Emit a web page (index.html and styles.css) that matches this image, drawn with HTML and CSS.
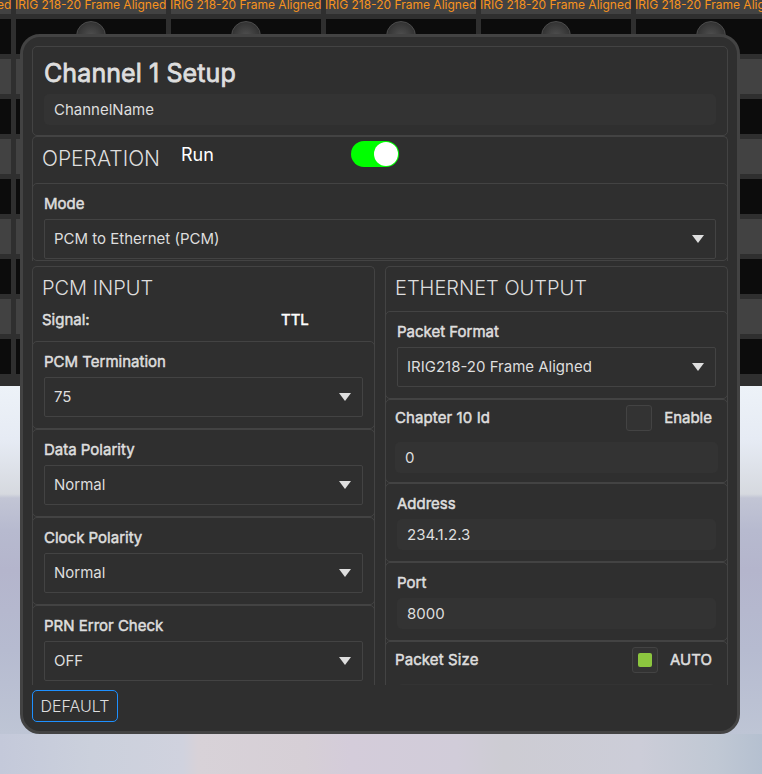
FILE: index.html
```html
<!DOCTYPE html>
<html lang="en">
<head>
<meta charset="utf-8">
<title>Channel 1 Setup</title>
<link rel="stylesheet" href="styles.css">
</head>
<body>
<div class="board">
  <div class="board-row status"><span>IRIG 218-20 Frame Aligned</span><span>IRIG 218-20 Frame Aligned</span><span>IRIG 218-20 Frame Aligned</span><span>IRIG 218-20 Frame Aligned</span><span>IRIG 218-20 Frame Aligned</span><span>IRIG 218-20 Frame Aligned</span></div>
  <div class="board-row dark lamps"><span></span><span><i></i></span><span><i></i></span><span><i></i></span><span><i></i></span><span><i></i></span></div>
  <div class="board-row"><span></span><span></span><span></span><span></span><span></span><span></span></div>
  <div class="board-row dark"><span></span><span></span><span></span><span></span><span></span><span></span></div>
  <div class="board-row"><span></span><span></span><span></span><span></span><span></span><span></span></div>
  <div class="board-row dark"><span></span><span></span><span></span><span></span><span></span><span></span></div>
  <div class="board-row"><span></span><span></span><span></span><span></span><span></span><span></span></div>
  <div class="board-row dark"><span></span><span></span><span></span><span></span><span></span><span></span></div>
  <div class="board-row"><span></span><span></span><span></span><span></span><span></span><span></span></div>
  <div class="board-row dark"><span></span><span></span><span></span><span></span><span></span><span></span></div>
</div>

<main class="dialog">
  <section class="box name-box">
    <h1>Channel 1 Setup</h1>
    <div class="input">ChannelName</div>
  </section>

  <section class="group operation">
    <div class="operation-head">
      <h2>OPERATION</h2>
      <span class="run">Run</span>
      <span class="toggle"></span>
    </div>
    <div class="box field">
      <label>Mode</label>
      <div class="select">PCM to Ethernet (PCM)<svg width="12" height="8"><path d="M0 0H12L6 8Z"/></svg></div>
    </div>
  </section>

  <div class="columns">
    <section class="group">
      <div class="pcm-head">
        <h2>PCM INPUT</h2>
        <div class="signal"><b>Signal:</b><b class="value">TTL</b></div>
      </div>
      <div class="box field">
        <label>PCM Termination</label>
        <div class="select">75<svg width="12" height="8"><path d="M0 0H12L6 8Z"/></svg></div>
      </div>
      <div class="box field">
        <label>Data Polarity</label>
        <div class="select">Normal<svg width="12" height="8"><path d="M0 0H12L6 8Z"/></svg></div>
      </div>
      <div class="box field">
        <label>Clock Polarity</label>
        <div class="select">Normal<svg width="12" height="8"><path d="M0 0H12L6 8Z"/></svg></div>
      </div>
      <div class="box field">
        <label>PRN Error Check</label>
        <div class="select">OFF<svg width="12" height="8"><path d="M0 0H12L6 8Z"/></svg></div>
      </div>
    </section>

    <section class="group">
      <div class="eth-head"><h2>ETHERNET OUTPUT</h2></div>
      <div class="box field">
        <label>Packet Format</label>
        <div class="select">IRIG218-20 Frame Aligned<svg width="12" height="8"><path d="M0 0H12L6 8Z"/></svg></div>
      </div>
      <div class="box check-field chapter">
        <div class="check-row"><b>Chapter 10 Id</b><span class="check"></span><b>Enable</b></div>
        <div class="input">0</div>
      </div>
      <div class="box text-field">
        <label>Address</label>
        <div class="input">234.1.2.3</div>
      </div>
      <div class="box text-field">
        <label>Port</label>
        <div class="input">8000</div>
      </div>
      <div class="box check-field packet-size">
        <div class="check-row"><b>Packet Size</b><span class="check on"></span><b>AUTO</b></div>
        <div class="input"></div>
      </div>
    </section>
  </div>

  <button class="default" type="button">DEFAULT</button>
</main>
</body>
</html>
```

FILE: styles.css
```css
* {
  box-sizing: border-box;
}

body {
  margin: 0;
  width: 762px;
  height: 774px;
  overflow: hidden;
  position: relative;
  font-family: Inter, "Liberation Sans", sans-serif;
  font-size: 15px;
  color: #dedede;
  background:
    linear-gradient(90deg, #c4c9da 0%, #cbd0dc 12%, #d0d2de 24%, #d8d2d8 26%, #d6cfd6 40%, #d4ccda 46%, #d1ccd9 60%, #cdccd3 66%, #cccdd8 84%, #c0c8d4 94%, #b5c0d0 100%) 0 734px / 762px 40px no-repeat,
    linear-gradient(180deg, #edf2f8 386px, #e6ebf4 440px, #d6d9df 494px, #c2c5d5 498px, #b7bacf 530px, #b4b5cc 570px, #b6bbd0 650px, #bec5d5 734px);
}

.board {
  display: flex;
  flex-direction: column;
  gap: 5px;
  height: 386px;
  overflow: hidden;
  background: #2f2f2f;
}

.board-row {
  display: grid;
  grid-template-columns: repeat(6, 150px);
  column-gap: 5px;
  margin-left: -139px;
  width: 925px;
  height: 35px;
  flex: none;
}

.board-row span {
  background: #424242;
}

.board-row.dark span {
  background: #0c0c0c;
}

.board-row.status {
  height: 14px;
}

.status span {
  color: #f7931e;
  font-size: 12px;
  line-height: 10px;
  text-indent: -1px;
  white-space: nowrap;
}

.lamps i {
  display: block;
  width: 30px;
  height: 30px;
  margin: 2px auto 0;
  border: 1px solid #4c4c4c;
  border-radius: 50%;
  background: radial-gradient(circle, #505050, #272727);
}

.dialog {
  position: absolute;
  left: 20px;
  top: 34px;
  width: 720px;
  height: 700px;
  padding: 9px;
  border: 3px solid #434343;
  border-radius: 20px;
  background: #2f2f2f;
}

.box {
  border: 1px solid #434343;
  border-radius: 5px;
}

h1,
h2 {
  margin: 0;
}

h1 {
  font-size: 25px;
  font-weight: 400;
  line-height: 30px;
  letter-spacing: 0.1px;
  -webkit-text-stroke: 0.8px currentColor;
}

h2 {
  font-size: 20px;
  font-weight: 300;
  line-height: 25px;
}

label,
b {
  display: block;
  font-weight: 400;
  line-height: 20px;
  -webkit-text-stroke: 0.5px currentColor;
}

.name-box {
  height: 90px;
  padding: 11px;
}

.name-box .input {
  margin-top: 6px;
}

.input {
  height: 31px;
  padding-left: 10px;
  border-radius: 5px;
  background: #333;
  line-height: 31px;
}

.select {
  display: flex;
  align-items: center;
  justify-content: space-between;
  height: 40px;
  padding: 0 11px 2px 9px;
  border: 1px solid #434343;
  border-radius: 2px;
}

.select svg {
  margin-top: 2px;
  fill: #dedede;
}

.group {
  border: 1px solid #434343;
  border-bottom: 0;
  border-radius: 5px 5px 0 0;
}

.group > .box {
  margin: 0 -1px;
}

.field {
  height: 88px;
  padding: 10px 11px 0;
}

.field label,
.text-field label {
  margin-bottom: 5px;
}

.operation {
  height: 125px;
}

.operation .field {
  height: 78px;
}

.operation-head {
  display: flex;
  height: 46px;
  padding: 9px 9px 0;
}

.operation-head h2 {
  width: 118px;
  font-size: 21px;
  line-height: 26px;
}

.operation-head .run {
  width: 170px;
  margin-left: 21px;
  margin-top: -3px;
  font-size: 18px;
  line-height: 24px;
  color: #fff;
}

.toggle {
  width: 48px;
  height: 26px;
  margin-top: -5px;
  padding: 1px;
  border-radius: 13px;
  background: #0f0;
}

.toggle::after {
  content: "";
  display: block;
  width: 24px;
  height: 24px;
  margin-left: auto;
  border-radius: 50%;
  background: #fff;
}

.columns {
  display: grid;
  grid-template-columns: 343px 343px;
  justify-content: space-between;
  height: 419px;
  margin-top: 5px;
  overflow: hidden;
}

.pcm-head {
  height: 74px;
  padding: 9px 9px 0;
}

.signal {
  display: grid;
  grid-template-columns: 239px auto;
  margin-top: 9px;
}

.signal .value {
  color: #fff;
}

.eth-head {
  height: 44px;
  padding: 9px 9px 0;
}

.text-field {
  height: 79px;
  padding: 10px 11px 0;
}

.check-field {
  height: 84px;
  padding: 5px 9px 0;
}

.check-row {
  display: flex;
  align-items: center;
  height: 26px;
  margin-bottom: 11px;
}

.check-row b:first-child {
  flex: 1;
  letter-spacing: 0.1px;
}

.check-row b:last-child {
  margin-left: 12px;
  margin-right: 6px;
}

.check {
  display: grid;
  place-items: center;
  width: 26px;
  height: 26px;
  border: 1px solid #434343;
  border-radius: 3px;
  background: #333;
}

.check.on::after {
  content: "";
  width: 14px;
  height: 14px;
  border-radius: 2px;
  background: #8cc63f;
}

.packet-size .input {
  margin: 0 2px;
}

.default {
  display: block;
  width: 86px;
  height: 32px;
  margin-top: 5px;
  padding: 0;
  border: 1px solid #1e90ff;
  border-radius: 5px;
  background: transparent;
  color: #dedede;
  font: 350 16px/31px Inter, "Liberation Sans", sans-serif;
}
```
